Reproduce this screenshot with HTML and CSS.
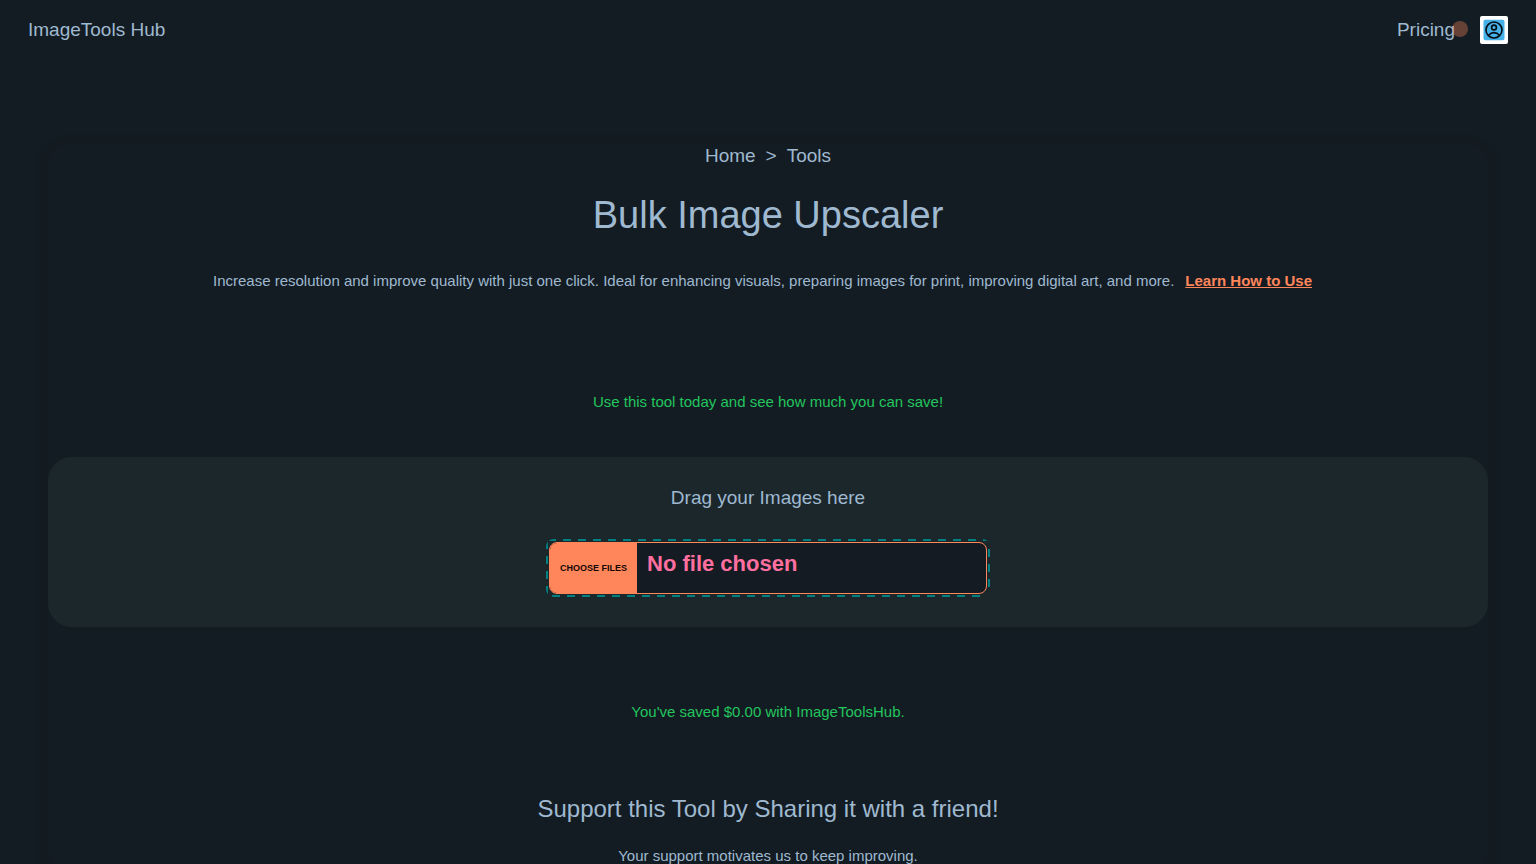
FILE: index.html
```html
<!DOCTYPE html>
<html lang="en">
<head>
<meta charset="utf-8">
<meta name="viewport" content="width=device-width, initial-scale=1">
<title>Bulk Image Upscaler</title>
<link rel="stylesheet" href="styles.css">
</head>
<body>
<header class="navbar">
  <a class="brand" href="#">ImageTools Hub</a>
  <nav class="nav-links">
    <a class="pricing" href="#">Pricing<span class="dot"></span></a>
    <button class="account" type="button" aria-label="Account">
      <svg viewBox="0 0 28 28" width="28" height="28" aria-hidden="true">
        <rect width="28" height="28" rx="2" fill="#fff"/>
        <rect x="3.5" y="3.7" width="21" height="20.6" rx="2" fill="#45b1e8"/>
        <g fill="none" stroke="#050b12" stroke-width="1.6">
          <circle cx="14" cy="14" r="8"/>
          <circle cx="14" cy="11.5" r="2.4"/>
          <path d="M8.7 19.2c2.8-3.5 7.8-3.5 10.6 0"/>
        </g>
      </svg>
    </button>
  </nav>
</header>
<main class="tool">
  <nav class="crumbs" aria-label="Breadcrumb">
    <a href="#">Home</a><span>&gt;</span><a href="#">Tools</a>
  </nav>
  <h1 class="title">Bulk Image Upscaler</h1>
  <p class="intro">Increase resolution and improve quality with just one click. Ideal for enhancing visuals, preparing images for print, improving digital art, and more.<a class="learn" href="#">Learn How to Use</a></p>
  <p class="note">Use this tool today and see how much you can save!</p>
  <section class="dropzone">
    <label class="drop-label" for="files">Drag your Images here</label>
    <div class="drop-frame"><input class="file-input" id="files" type="file" multiple></div>
  </section>
  <p class="note">You've saved $0.00 with ImageToolsHub.</p>
  <section class="share">
    <h2 class="share-title">Support this Tool by Sharing it with a friend!</h2>
    <p class="share-text">Your support motivates us to keep improving.</p>
  </section>
</main>
</body>
</html>
```
FILE: styles.css
```css
* {
  box-sizing: border-box;
}

body {
  margin: 0;
  background: #141c23;
  color: #9fb9d0;
  font: 15px/24px "Liberation Sans", Arial, sans-serif;
}

a {
  color: inherit;
  text-decoration: none;
}

h1, h2, p {
  margin: 0;
  font-weight: 400;
}

.navbar {
  display: flex;
  align-items: center;
  justify-content: space-between;
  height: 60px;
  padding: 0 28px;
  font-size: 19px;
}

.nav-links {
  display: flex;
  align-items: center;
  gap: 25px;
}

.pricing {
  position: relative;
}

.dot {
  position: absolute;
  top: 3px;
  right: -13px;
  width: 16px;
  height: 16px;
  border-radius: 50%;
  background: #ff865b;
  opacity: 0.35;
}

.account {
  display: flex;
  padding: 0;
  border: 0;
  background: none;
}

.tool {
  display: flex;
  flex-direction: column;
  margin: 84px 48px 0;
  border-radius: 20px;
  box-shadow: 0 4px 4px 11px rgb(0 0 0 / 4%);
  text-align: center;
}

.crumbs {
  display: flex;
  justify-content: center;
  gap: 10px;
  font-size: 19px;
}

.title {
  margin-top: 23px;
  font-size: 38px;
  line-height: 48px;
}

.intro {
  margin-top: 30px;
  padding-right: 11px;
}

.learn {
  margin-left: 11px;
  color: #ff865b;
  font-weight: 700;
  text-decoration: underline;
}

.note {
  margin-top: 97px;
  color: #22c55e;
}

.dropzone {
  display: flex;
  flex-direction: column;
  align-items: center;
  gap: 29px;
  margin-top: 43px;
  margin-bottom: -24px;
  padding: 29px 24px 30px;
  border-radius: 24px;
  background: #1c272c;
}

.drop-label {
  font-size: 19px;
}

/* Long dashes: 8px on, 7px off, one gradient per edge. */
.drop-frame {
  --dash-x: linear-gradient(90deg, #008080 8px, transparent 8px);
  --dash-y: linear-gradient(180deg, #008080 8px, transparent 8px);
  width: 444px;
  max-width: 100%;
  padding: 3px;
  border-radius: 8px;
  background:
    var(--dash-x) 2px 0 / 15px 2px repeat-x,
    var(--dash-x) 6px 100% / 15px 2px repeat-x,
    var(--dash-y) 0 2px / 2px 15px repeat-y,
    var(--dash-y) 100% 10px / 2px 15px repeat-y;
}

.file-input {
  display: block;
  width: 100%;
  height: 52px;
  border: 1px solid #ff865b;
  border-radius: 8px;
  background: #151b23;
  color: #ff6f9f;
  font: 700 22px/40px "Liberation Sans", Arial, sans-serif;
  overflow: hidden;
}

.file-input::file-selector-button {
  height: 50px;
  margin: 0 10px 0 0;
  padding: 0 10px;
  border: 0;
  background: #ff865b;
  color: #160603;
  font: 700 9px/50px "Liberation Sans", Arial, sans-serif;
  text-transform: uppercase;
}

.share {
  display: flex;
  flex-direction: column;
  gap: 19px;
  margin-top: 69px;
}

.share-title {
  font-size: 24px;
  line-height: 32px;
}
```
